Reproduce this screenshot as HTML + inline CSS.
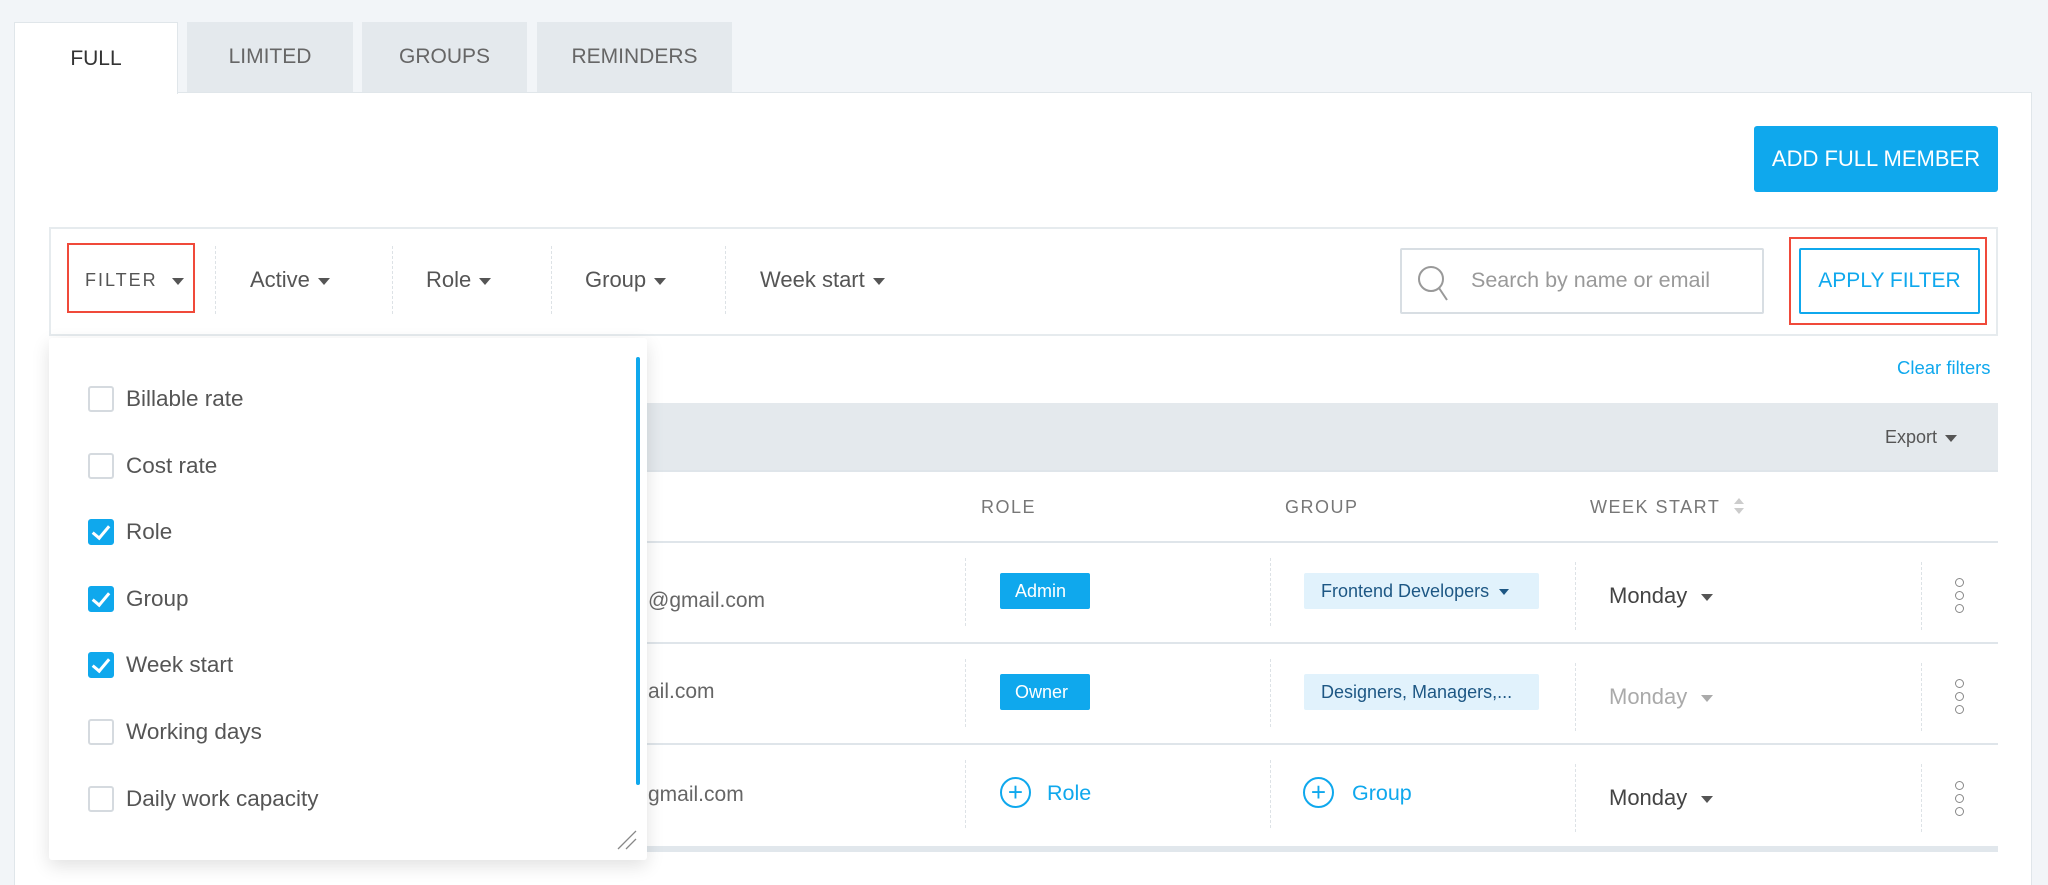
<!DOCTYPE html>
<html style="width:2048px;height:885px;overflow:hidden"><head><meta charset="utf-8"><style>
*{box-sizing:border-box;margin:0;padding:0}
body{width:2048px;height:885px;background:#f2f5f8;font-family:"Liberation Sans",sans-serif;position:relative;overflow:hidden;color:#555}
.a{position:absolute}
.tab{position:absolute;top:22px;height:70px;background:#e4e9ed;color:#666;font-size:21px;display:flex;align-items:center;justify-content:center}
.panel{left:14px;top:92px;width:2018px;height:793px;background:#fff;border:1px solid #e0e6ea;border-bottom:none}
.car{display:inline-block;width:0;height:0;border-left:6px solid transparent;border-right:6px solid transparent;border-top:7px solid #555;margin-left:8px;vertical-align:middle}
.fl{position:absolute;top:267px;font-size:22px;color:#555}
.sep{position:absolute;top:246px;height:68px;border-left:1px dashed #dde2e6}
.cb{position:absolute;left:88px;width:26px;height:26px;border:2px solid #d5dadf;border-radius:3px;background:#fff}
.cb.on{background:#0fa8ed;border-color:#0fa8ed}
.cb.on:after{content:"";position:absolute;left:6px;top:1px;width:7px;height:14px;border:solid #fff;border-width:0 3px 3px 0;transform:rotate(40deg)}
.it{position:absolute;left:126px;font-size:22.5px;color:#555}
.vs{position:absolute;border-left:1px dashed #dde2e6;height:68px}
.badge{position:absolute;background:#0fa8ed;color:#fff;font-size:18px;height:36px;line-height:36px;padding:0 14px;border-radius:2px}
.gb{position:absolute;left:1304px;width:235px;height:36px;line-height:36px;background:#e1f2fc;color:#1d5784;font-size:18px;padding-left:17px;border-radius:2px}
.mon{position:absolute;left:1609px;font-size:22px;color:#444}
.dots{position:absolute;left:1955px;width:9px}
.dots i{display:block;width:9px;height:9px;border:1.5px solid #888;border-radius:50%;margin-bottom:4px}
.rs{position:absolute;left:49px;width:1949px;height:2px;background:#dfe5ea}
.email{position:absolute;left:648px;font-size:21px;color:#666}
.plus{position:absolute;width:31px;height:31px;border:2px solid #0fa8ed;border-radius:50%;color:#0fa8ed;text-align:center;line-height:26px;font-size:26px}
</style></head><body>
<div class="a" style="left:14px;top:22px;width:164px;height:72px;background:#fff;border:1px solid #e0e6ea;border-bottom:none;z-index:2;font-size:21px;color:#333;display:flex;align-items:center;justify-content:center">FULL</div>
<div class="tab" style="left:187px;width:166px">LIMITED</div>
<div class="tab" style="left:362px;width:165px">GROUPS</div>
<div class="tab" style="left:537px;width:195px">REMINDERS</div>
<div class="a panel"></div>
<div class="a" style="left:1754px;top:126px;width:244px;height:66px;background:#0fa8ed;border-radius:3px;color:#fff;font-size:22px;display:flex;align-items:center;justify-content:center">ADD FULL MEMBER</div>
<div class="a" style="left:49px;top:227px;width:1949px;height:109px;border:2px solid #e6ebee;background:#fff"></div>
<div class="a" style="left:67px;top:243px;width:128px;height:70px;border:2px solid #f04a3a"></div>
<div class="fl" style="left:85px;font-size:18px;letter-spacing:2px;top:270px">FILTER<span class="car" style="margin-left:14px"></span></div>
<div class="sep" style="left:215px"></div><div class="sep" style="left:392px"></div><div class="sep" style="left:551px"></div><div class="sep" style="left:725px"></div>
<div class="fl" style="left:250px">Active<span class="car"></span></div>
<div class="fl" style="left:426px">Role<span class="car"></span></div>
<div class="fl" style="left:585px">Group<span class="car"></span></div>
<div class="fl" style="left:760px">Week start<span class="car"></span></div>
<div class="a" style="left:1400px;top:248px;width:364px;height:66px;border:2px solid #d8dee3;border-radius:2px;background:#fff"></div>
<svg class="a" style="left:1416px;top:264px" width="36" height="40"><circle cx="15" cy="15" r="12" fill="none" stroke="#999" stroke-width="2"/><line x1="23" y1="24" x2="31" y2="36" stroke="#999" stroke-width="2"/></svg>
<div class="a" style="left:1471px;top:268px;font-size:21.5px;color:#999">Search by name or email</div>
<div class="a" style="left:1789px;top:237px;width:198px;height:88px;border:2px solid #f04a3a"></div>
<div class="a" style="left:1799px;top:248px;width:181px;height:66px;border:2px solid #0fa8ed;border-radius:2px;color:#0fa8ed;font-size:21px;display:flex;align-items:center;justify-content:center">APPLY FILTER</div>
<div class="a" style="left:1897px;top:357px;font-size:18.5px;color:#0fa8ed">Clear filters</div>
<div class="a" style="left:49px;top:403px;width:1949px;height:68px;background:#e4e9ed"></div>
<div class="a" style="left:1885px;top:427px;font-size:18px;color:#555">Export<span class="car" style="border-top-color:#555"></span></div>
<div class="rs" style="top:470px"></div>
<div class="a" style="left:49px;top:472px;width:1949px;height:376px;background:#fff"></div>
<div class="a" style="left:981px;top:497px;font-size:18px;letter-spacing:1.5px;color:#777">ROLE</div>
<div class="a" style="left:1285px;top:497px;font-size:18px;letter-spacing:1.5px;color:#777">GROUP</div>
<div class="a" style="left:1590px;top:497px;font-size:18px;letter-spacing:1.5px;color:#777">WEEK START</div>
<svg class="a" style="left:1733px;top:496px" width="12" height="20"><path d="M1 8L6 2L11 8Z M1 12L6 18L11 12Z" fill="#ccc"/></svg>
<div class="rs" style="top:541px"></div><div class="rs" style="top:642px"></div><div class="rs" style="top:743px"></div>
<div class="a" style="left:49px;top:846px;width:1949px;height:6px;background:#e1e7ec"></div>
<div class="email" style="top:589px">@gmail.com</div>
<div class="vs" style="left:965px;top:558px"></div><div class="vs" style="left:1270px;top:558px"></div><div class="vs" style="left:1575px;top:562px"></div><div class="vs" style="left:1921px;top:562px"></div>
<div class="badge" style="left:1000px;top:573px;width:90px;padding:0 0 0 15px">Admin</div>
<div class="gb" style="top:573px">Frontend Developers<span class="car" style="border-top-color:#1d5784;margin-left:10px;border-width:6px 5px 0"></span></div>
<div class="mon" style="top:583px">Monday<span class="car" style="margin-left:14px"></span></div>
<div class="dots" style="top:578px"><i></i><i></i><i></i></div>
<div class="email" style="top:680px">ail.com</div>
<div class="vs" style="left:965px;top:659px"></div><div class="vs" style="left:1270px;top:659px"></div><div class="vs" style="left:1575px;top:663px"></div><div class="vs" style="left:1921px;top:663px"></div>
<div class="badge" style="left:1000px;top:674px;width:90px;padding:0 0 0 15px">Owner</div>
<div class="gb" style="top:674px">Designers, Managers,...</div>
<div class="mon" style="top:684px;color:#aaa">Monday<span class="car" style="margin-left:14px;border-top-color:#aaa"></span></div>
<div class="dots" style="top:679px"><i></i><i></i><i></i></div>
<div class="email" style="top:783px">gmail.com</div>
<div class="vs" style="left:965px;top:760px"></div><div class="vs" style="left:1270px;top:760px"></div><div class="vs" style="left:1575px;top:764px"></div><div class="vs" style="left:1921px;top:764px"></div>
<div class="plus" style="left:1000px;top:777px">+</div><div class="a" style="left:1047px;top:781px;font-size:21.5px;color:#0fa8ed">Role</div>
<div class="plus" style="left:1303px;top:777px">+</div><div class="a" style="left:1352px;top:781px;font-size:21.5px;color:#0fa8ed">Group</div>
<div class="mon" style="top:785px">Monday<span class="car" style="margin-left:14px"></span></div>
<div class="dots" style="top:781px"><i></i><i></i><i></i></div>
<div class="a" style="left:49px;top:338px;width:598px;height:522px;background:#fff;box-shadow:0 6px 18px rgba(0,0,0,.12);border-radius:3px"></div>
<div class="a" style="left:636px;top:357px;width:4px;height:428px;background:#0fa8ed;border-radius:2px"></div>
<div class="cb" style="top:386px"></div><div class="it" style="top:386px">Billable rate</div>
<div class="cb" style="top:453px"></div><div class="it" style="top:453px">Cost rate</div>
<div class="cb on" style="top:519px"></div><div class="it" style="top:519px">Role</div>
<div class="cb on" style="top:586px"></div><div class="it" style="top:586px">Group</div>
<div class="cb on" style="top:652px"></div><div class="it" style="top:652px">Week start</div>
<div class="cb" style="top:719px"></div><div class="it" style="top:719px">Working days</div>
<div class="cb" style="top:786px"></div><div class="it" style="top:786px">Daily work capacity</div>
<svg class="a" style="left:616px;top:829px" width="22" height="22"><path d="M2 20L20 2M10 20L20 10" stroke="#888" stroke-width="1.3"/></svg>
</body></html>
